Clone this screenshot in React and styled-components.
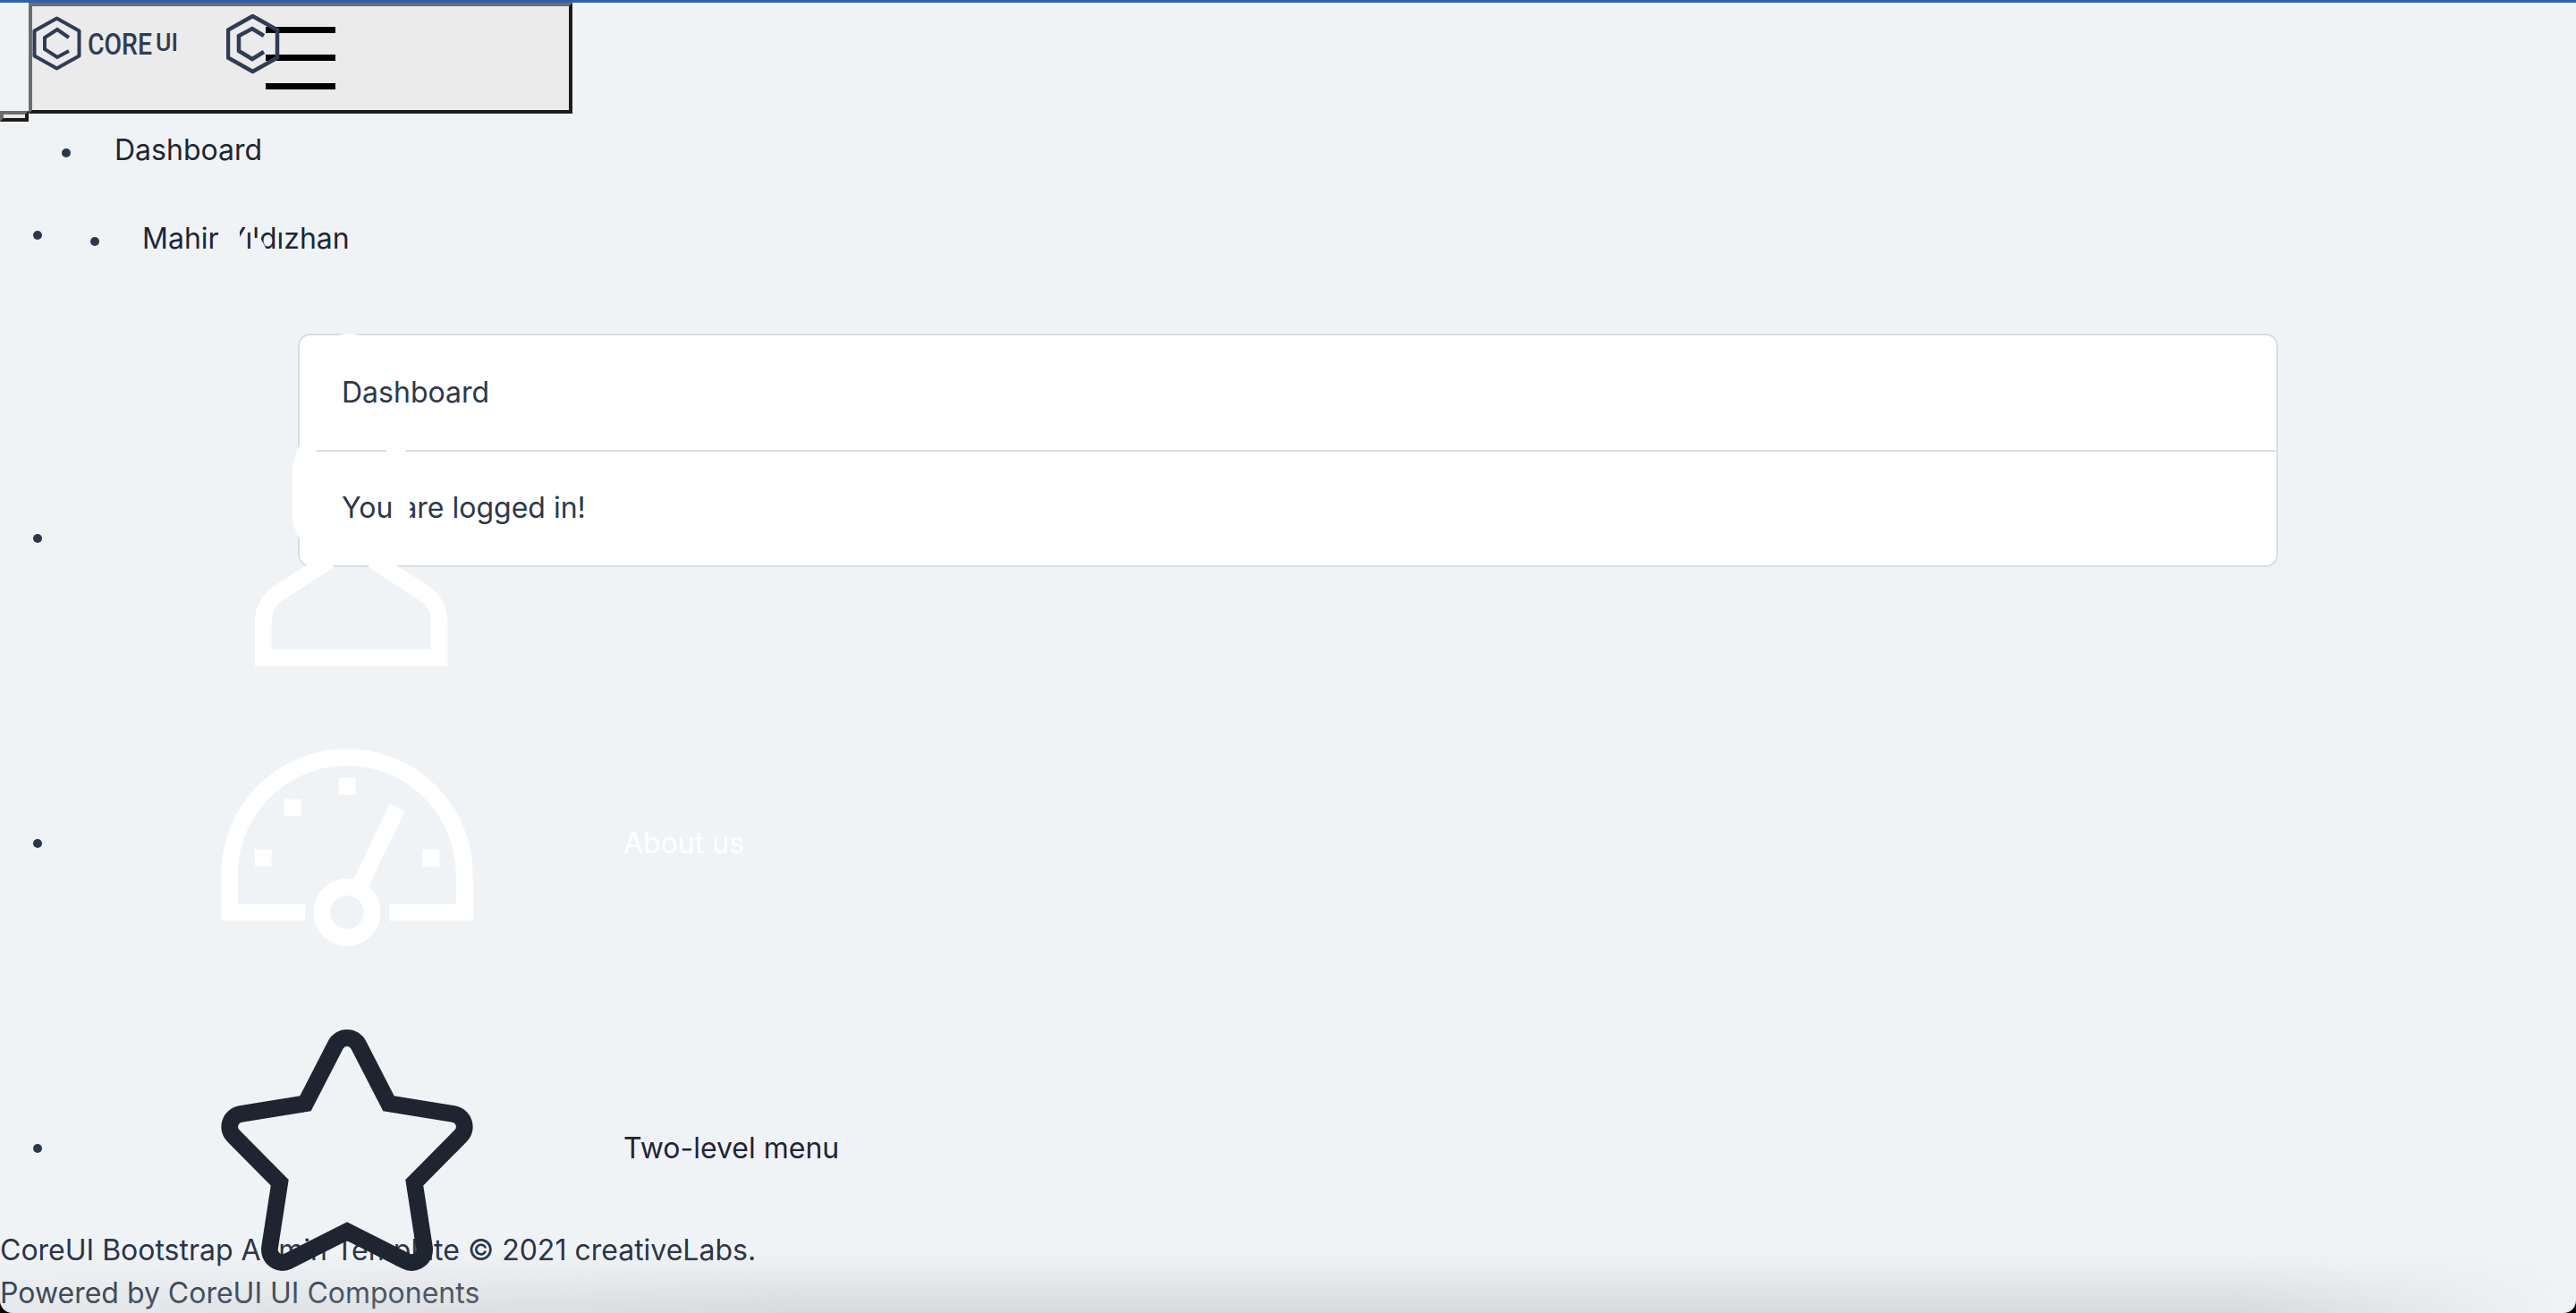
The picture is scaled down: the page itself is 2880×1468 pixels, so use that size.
import React from "react";
import styled, { createGlobalStyle } from "styled-components";

const Global = createGlobalStyle`
  html, body { margin: 0; padding: 0; background: #000; }
  body { font-family: Inter, "Noto Sans", sans-serif; font-size: 32px; line-height: 48px; color: #2c384a; }
  * { box-sizing: border-box; }
`;

const Page = styled.div`
  position: relative;
  width: 2880px;
  height: 1468px;
  overflow: hidden;
  display: grid;
  grid-template-columns: 1fr;
  background: #f0f3f6;
  border-radius: 0 0 14px 14px;
  &::after {
    content: "";
    position: absolute;
    left: 0;
    right: 0;
    bottom: 0;
    height: 66px;
    pointer-events: none;
    background: linear-gradient(to bottom, rgba(190, 192, 194, 0), rgba(190, 192, 194, 0.5));
    -webkit-mask-image: linear-gradient(to right, rgba(0,0,0,.4) 0, #000 900px, #000 2500px, transparent 2860px);
    mask-image: linear-gradient(to right, rgba(0,0,0,.4) 0, #000 900px, #000 2500px, transparent 2860px);
  }
`;

const ContentLayer = styled.main`
  grid-area: 1 / 1;
  height: 1468px;
  padding-top: 373px;
  display: flex;
  flex-direction: column;
  justify-content: space-between;
`;

const Card = styled.section`
  position: relative;
  width: 2214px;
  margin-left: 333px;
  background: #fff;
  border: 2px solid #dbdcdf;
  border-radius: 14px;
  &::before {
    content: "";
    position: absolute;
    left: 42px;
    top: -2px;
    width: 26px;
    height: 8px;
    border-radius: 50%;
    background: #fff;
  }
`;

const CardHeader = styled.div`
  padding: 40px 47px;
  border-bottom: 2px solid #dbdcdf;
`;

const CardBody = styled.div`
  padding: 39px 47px 40px;
`;

const Footer = styled.footer`
  margin-bottom: -2px;
  color: #2a3546;
`;

const FooterLine = styled.div`
  white-space: nowrap;
`;

const NavLayer = styled.div`
  grid-area: 1 / 1;
  position: relative;
  z-index: 1;
  display: flex;
  flex-direction: column;
  align-items: flex-start;
  color: #1e2633;
`;

const Accent = styled.div`
  width: 100%;
  height: 3px;
  background: #3160a8;
  flex: none;
`;

const TopRow = styled.div`
  display: flex;
  align-items: flex-start;
`;

const EmptyButton = styled.button`
  width: 32px;
  height: 12px;
  margin-top: 121px;
  padding: 0;
  background: #ebebeb;
  border: 4px solid;
  border-color: #6d6d6d #1c1c1c #1c1c1c #6d6d6d;
`;

const BrandButton = styled.button`
  position: relative;
  width: 608px;
  height: 124px;
  padding: 0;
  background: #ebebeb;
  border: 4px solid;
  border-color: #6d6d6d #1c1c1c #1c1c1c #6d6d6d;
  display: flex;
  align-items: flex-start;
`;

const FullLogo = styled.svg`
  width: 180px;
  height: 80px;
  flex: none;
  margin-top: 8px;
`;

const Mark = styled.svg`
  position: relative;
  z-index: 1;
  width: 66px;
  height: 72px;
  flex: none;
  margin: 9px 0 0 37px;
`;

const Burger = styled.svg`
  width: 78px;
  height: 70px;
  flex: none;
  margin: 23px 0 0 -22px;
`;

const Row = styled.div`
  position: relative;
  display: flex;
  align-items: center;
  height: 48px;
  margin-top: ${(p) => p.$top}px;
  padding-left: ${(p) => p.$left}px;
  white-space: nowrap;
`;

const Bullet = styled.span`
  flex: none;
  width: 10px;
  height: 10px;
  border-radius: 50%;
  background: #2c384a;
  margin-right: ${(p) => p.$gap}px;
  transform: translateY(${(p) => p.$shift}px);
`;

const TextMask = styled.svg`
  position: absolute;
  left: 248px;
  top: 0;
  width: 60px;
  height: 48px;
  fill: #f0f3f6;
`;

const IconList = styled.ul`
  list-style: none;
  margin: 163px 0 0;
  padding: 0 0 0 37px;
  display: flex;
  flex-direction: column;
  gap: 45px;
`;

const IconRow = styled.li`
  display: flex;
  align-items: center;
  height: 296px;
`;

const RowBullet = styled.span`
  flex: none;
  width: 10px;
  height: 10px;
  border-radius: 50%;
  background: #2c384a;
`;

const NavIcon = styled.svg`
  flex: none;
  align-self: flex-start;
  width: 300px;
  height: 300px;
  margin-left: 191px;
  fill: ${(p) => p.$color};
`;

const NavLabel = styled.span`
  margin-left: 159px;
  color: ${(p) => p.$color};
`;

const hex = (cx, cy, w, h) =>
  `${cx},${cy - h / 2} ${cx + w / 2},${cy - h / 4} ${cx + w / 2},${cy + h / 4} ${cx},${cy + h / 2} ${cx - w / 2},${cy + h / 4} ${cx - w / 2},${cy - h / 4}`;

export default function App() {
  return (
    <Page>
      <Global />
      <ContentLayer>
        <Card>
          <CardHeader>Dashboard</CardHeader>
          <CardBody>You are logged in!</CardBody>
        </Card>
        <Footer>
          <FooterLine>CoreUI Bootstrap Admin Template © 2021 creativeLabs.</FooterLine>
          <FooterLine>Powered by CoreUI UI Components</FooterLine>
        </Footer>
      </ContentLayer>
      <NavLayer>
        <Accent />
        <TopRow>
          <EmptyButton aria-label="toggle" />
          <BrandButton aria-label="CoreUI">
            <FullLogo viewBox="0 0 180 80">
              <polygon points={hex(27.5, 33.5, 50, 56)} fill="none" stroke="#303c54" strokeWidth="4" strokeLinejoin="round" />
              <polyline points="41,27 28,18 14,27 14,40 28,49 41,42" fill="none" stroke="#303c54" strokeWidth="4" />
              <text x="62" y="46" fontFamily="Roboto, sans-serif" fontWeight="500" fontSize="33.5" fill="#303c54" textLength="72" lengthAdjust="spacingAndGlyphs">CORE</text>
              <text x="138" y="42" fontFamily="Roboto, sans-serif" fontWeight="500" fontSize="28" fill="#303c54" textLength="25" lengthAdjust="spacingAndGlyphs">UI</text>
            </FullLogo>
            <Mark viewBox="0 0 66 72">
              <polygon points={hex(29.5, 33, 55, 62)} fill="none" stroke="#303c54" strokeWidth="4.5" strokeLinejoin="round" />
              <polyline points="42,24 29,16 14,24 14,41 29,50 42,42" fill="none" stroke="#303c54" strokeWidth="4.5" />
            </Mark>
            <Burger viewBox="0 0 78 70">
              <rect x="0" y="0" width="78" height="7" />
              <rect x="0" y="31" width="78" height="7" />
              <rect x="0" y="63" width="78" height="7" />
            </Burger>
          </BrandButton>
        </TopRow>
        <Row $top={8} $left={69}>
          <Bullet $gap={49} $shift={3} />
          Dashboard
        </Row>
        <Row $top={51} $left={37}>
          <Bullet $gap={54} $shift={-4} />
          <Bullet $gap={48} $shift={3} />
          Mahir Yıldızhan
          <TextMask viewBox="0 0 60 48">
            <polygon points="0,0 20,0 20,23 28,23 28,48 0,48" />
            <polygon points="35,23 43,23 54,43 54,48 35,48" />
          </TextMask>
        </Row>
        <IconList>
          <IconRow>
            <RowBullet />
            <NavIcon viewBox="0 0 512 512" $color="#fff">
              <path d="M411.6,343.656l-72.823-47.334,27.455-50.334A80.23,80.23,0,0,0,376,207.681V128a112,112,0,0,0-224,0v79.681a80.236,80.236,0,0,0,9.768,38.308l27.455,50.333-72.823,47.334A79.725,79.725,0,0,0,80,410.732V496H448V410.732A79.727,79.727,0,0,0,411.6,343.656ZM416,464H112V410.732a47.836,47.836,0,0,1,21.841-40.246l97.66-63.479-41.64-76.341A48.146,48.146,0,0,1,184,207.681V128a80,80,0,0,1,160,0v79.681a48.146,48.146,0,0,1-5.861,22.985L296.5,307.007l97.662,63.479A47.836,47.836,0,0,1,416,410.732Z" />
            </NavIcon>
          </IconRow>
          <IconRow>
            <RowBullet />
            <NavIcon viewBox="0 0 512 512" $color="#fff">
              <path d="M425.706,142.294A240,240,0,0,0,16,312v88H176V368H48V312c0-114.691,93.309-208,208-208s208,93.309,208,208v56H336v32H496V312A238.432,238.432,0,0,0,425.706,142.294Z" />
              <rect x="80" y="264" width="32" height="32" />
              <rect x="240" y="128" width="32" height="32" />
              <rect x="136" y="168" width="32" height="32" />
              <rect x="400" y="264" width="32" height="32" />
              <path d="M297.222,335.1l69.2-144.173-28.85-13.848L268.389,321.214A64.141,64.141,0,1,0,297.222,335.1ZM256,416a32,32,0,1,1,32-32A32.036,32.036,0,0,1,256,416Z" />
            </NavIcon>
            <NavLabel $color="#fff">About us</NavLabel>
          </IconRow>
          <IconRow>
            <RowBullet />
            <NavIcon viewBox="0 0 512 512" $color="#1e2530">
              <path d="M494,198.671a40.536,40.536,0,0,0-32.174-27.592L345.917,152.242,292.185,47.828a40.7,40.7,0,0,0-72.37,0L166.083,152.242,50.176,171.079a40.7,40.7,0,0,0-22.364,68.827l82.7,83.368-17.9,116.055a40.672,40.672,0,0,0,58.548,42.538L256,428.977l104.843,52.89a40.69,40.69,0,0,0,58.548-42.538l-17.9-116.055,82.7-83.368A40.538,40.538,0,0,0,494,198.671Zm-32.53,18.7L367.4,312.2l20.364,132.01a8.671,8.671,0,0,1-12.509,9.088L256,393.136,136.744,453.3a8.671,8.671,0,0,1-12.509-9.088L144.6,312.2,50.531,217.37a8.7,8.7,0,0,1,4.778-14.706L187.15,181.238,248.2,62.624a8.7,8.7,0,0,1,15.6,0l61.052,118.614,131.841,21.426A8.7,8.7,0,0,1,461.47,217.37Z" />
            </NavIcon>
            <NavLabel $color="#1e2633">Two-level menu</NavLabel>
          </IconRow>
        </IconList>
      </NavLayer>
    </Page>
  );
}
